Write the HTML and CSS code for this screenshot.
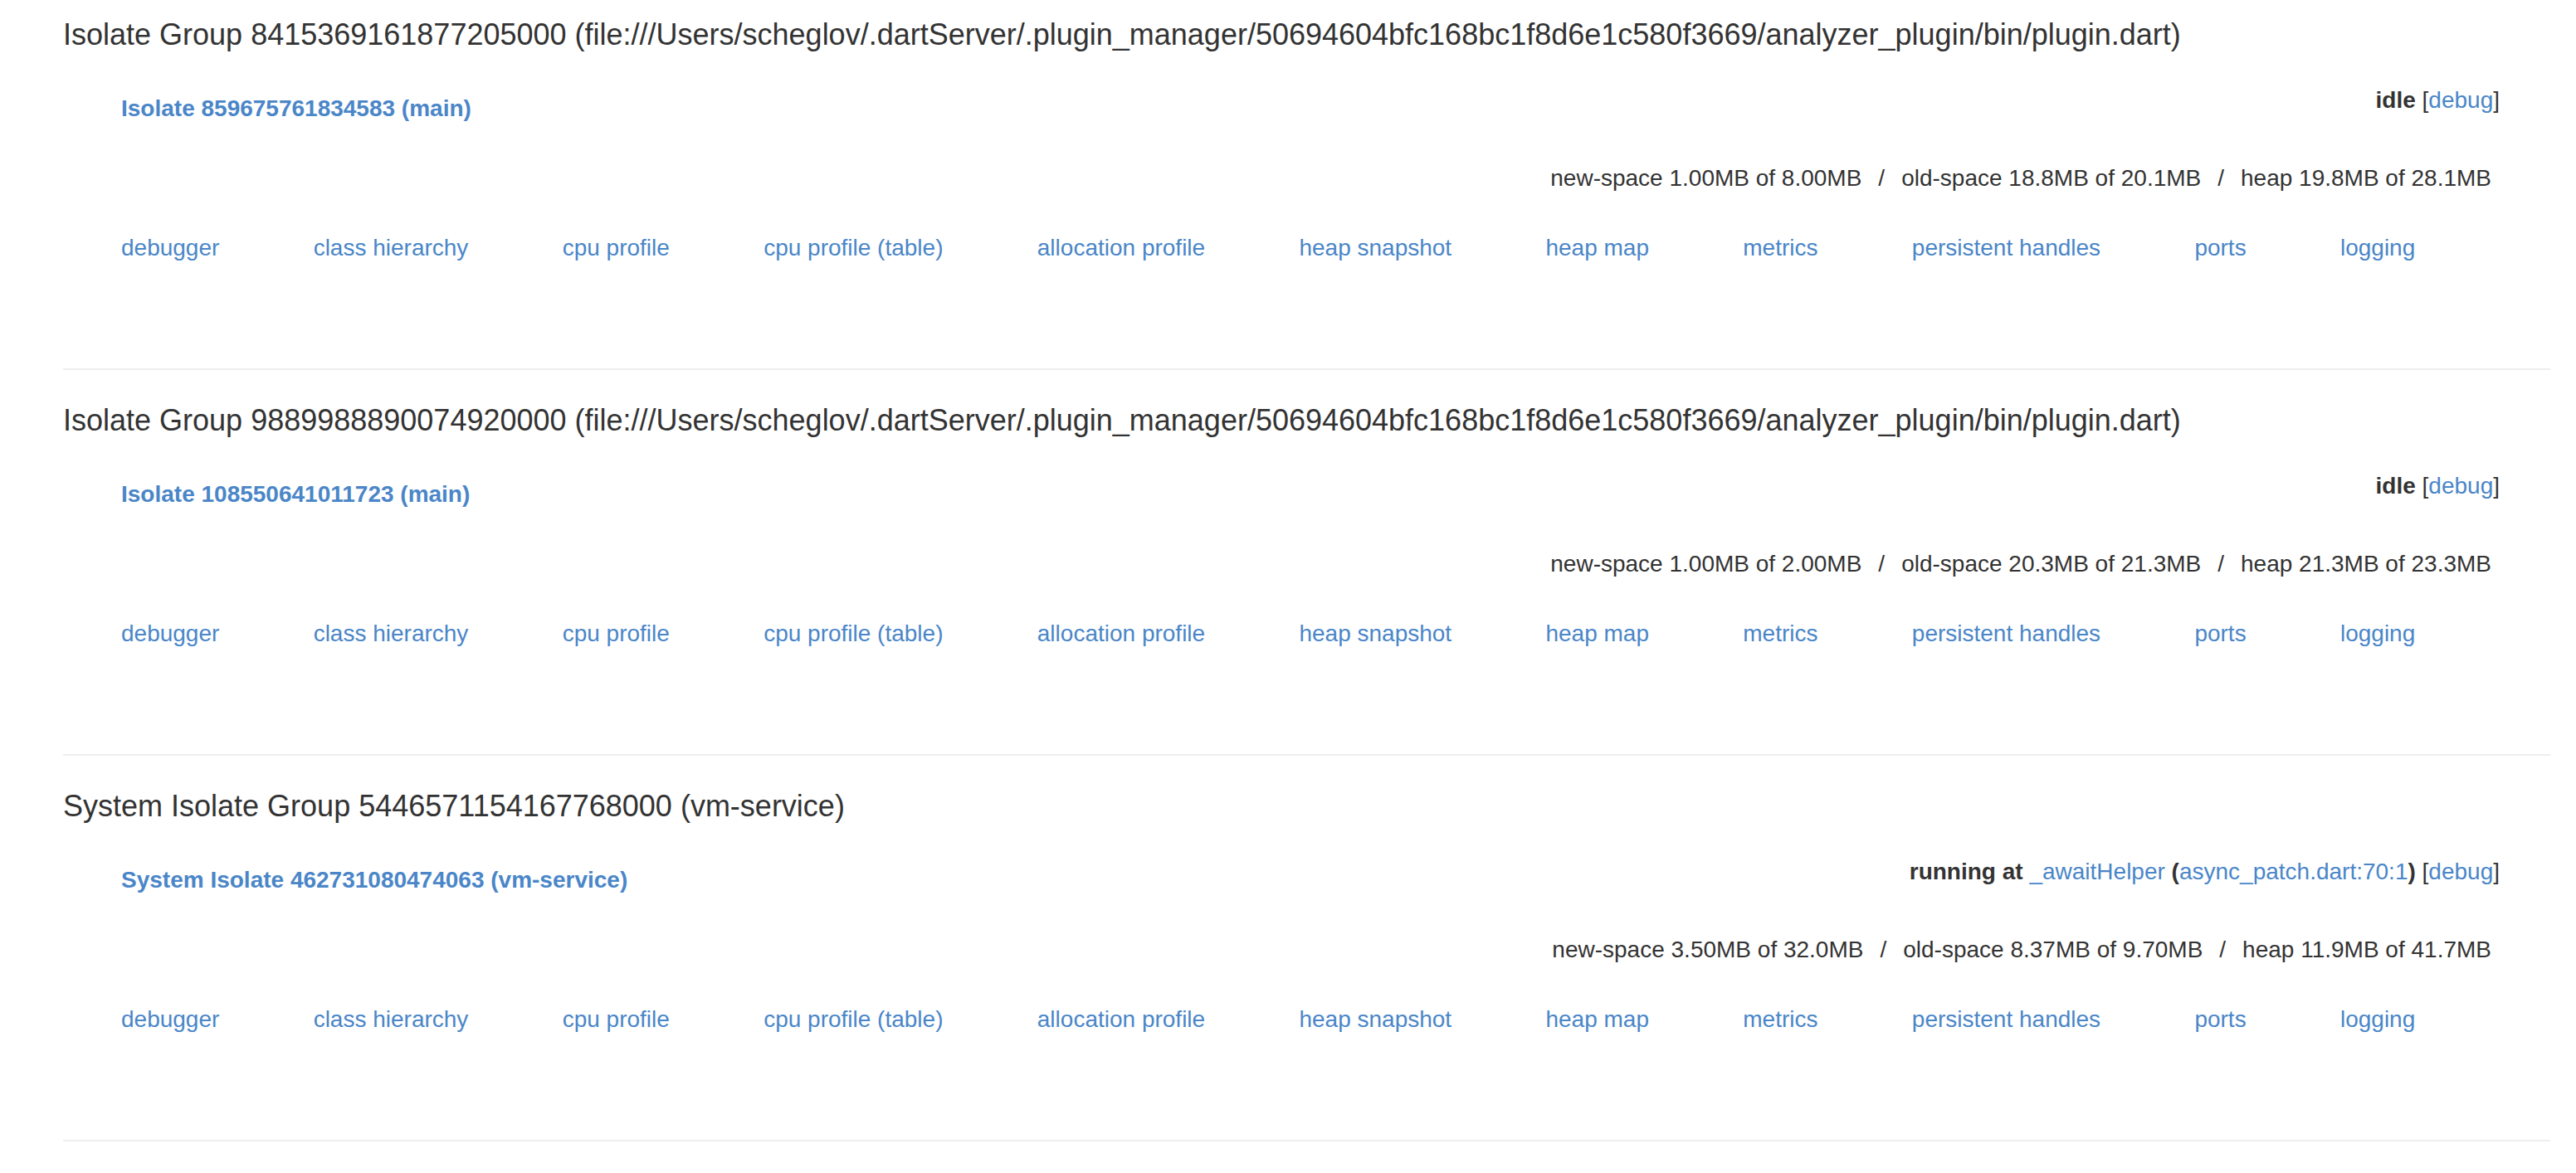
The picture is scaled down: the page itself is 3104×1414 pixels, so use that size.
FILE: index.html
```html
<!DOCTYPE html>
<html>
<head>
<meta charset="utf-8">
<title>Isolates</title>
<link rel="stylesheet" href="styles.css">
</head>
<body>
<div class="page">

  <section class="group">
    <h2 class="group-title">Isolate Group 8415369161877205000 (file:///Users/scheglov/.dartServer/.plugin_manager/50694604bfc168bc1f8d6e1c580f3669/analyzer_plugin/bin/plugin.dart)</h2>
    <div class="isolate">
      <div class="isolate-head">
        <a class="isolate-name" href="#">Isolate 859675761834583 (main)</a>
        <div class="status"><b>idle</b> [<a href="#">debug</a>]</div>
      </div>
      <div class="memory">new-space 1.00MB of 8.00MB<span class="sep">/</span>old-space 18.8MB of 20.1MB<span class="sep">/</span>heap 19.8MB of 28.1MB</div>
      <nav class="links">
        <a href="#">debugger</a>
        <a href="#">class hierarchy</a>
        <a href="#">cpu profile</a>
        <a href="#">cpu profile (table)</a>
        <a href="#">allocation profile</a>
        <a href="#">heap snapshot</a>
        <a href="#">heap map</a>
        <a href="#">metrics</a>
        <a href="#">persistent handles</a>
        <a href="#">ports</a>
        <a href="#">logging</a>
      </nav>
    </div>
  </section>

  <section class="group">
    <h2 class="group-title">Isolate Group 9889988890074920000 (file:///Users/scheglov/.dartServer/.plugin_manager/50694604bfc168bc1f8d6e1c580f3669/analyzer_plugin/bin/plugin.dart)</h2>
    <div class="isolate">
      <div class="isolate-head">
        <a class="isolate-name" href="#">Isolate 108550641011723 (main)</a>
        <div class="status"><b>idle</b> [<a href="#">debug</a>]</div>
      </div>
      <div class="memory">new-space 1.00MB of 2.00MB<span class="sep">/</span>old-space 20.3MB of 21.3MB<span class="sep">/</span>heap 21.3MB of 23.3MB</div>
      <nav class="links">
        <a href="#">debugger</a>
        <a href="#">class hierarchy</a>
        <a href="#">cpu profile</a>
        <a href="#">cpu profile (table)</a>
        <a href="#">allocation profile</a>
        <a href="#">heap snapshot</a>
        <a href="#">heap map</a>
        <a href="#">metrics</a>
        <a href="#">persistent handles</a>
        <a href="#">ports</a>
        <a href="#">logging</a>
      </nav>
    </div>
  </section>

  <section class="group">
    <h2 class="group-title">System Isolate Group 5446571154167768000 (vm-service)</h2>
    <div class="isolate">
      <div class="isolate-head">
        <a class="isolate-name" href="#">System Isolate 462731080474063 (vm-service)</a>
        <div class="status"><b>running at</b> <a href="#">_awaitHelper</a> <b>(</b><a href="#">async_patch.dart:70:1</a><b>)</b> [<a href="#">debug</a>]</div>
      </div>
      <div class="memory">new-space 3.50MB of 32.0MB<span class="sep">/</span>old-space 8.37MB of 9.70MB<span class="sep">/</span>heap 11.9MB of 41.7MB</div>
      <nav class="links">
        <a href="#">debugger</a>
        <a href="#">class hierarchy</a>
        <a href="#">cpu profile</a>
        <a href="#">cpu profile (table)</a>
        <a href="#">allocation profile</a>
        <a href="#">heap snapshot</a>
        <a href="#">heap map</a>
        <a href="#">metrics</a>
        <a href="#">persistent handles</a>
        <a href="#">ports</a>
        <a href="#">logging</a>
      </nav>
    </div>
  </section>

</div>
</body>
</html>
```

FILE: styles.css
```css
html, body {
  margin: 0;
  padding: 0;
  background: #ffffff;
}

body {
  font-family: "Liberation Sans", Arial, Helvetica, sans-serif;
  font-size: 28px;
  color: #333333;
}

a {
  color: #4a86c8;
  text-decoration: none;
}

.page {
  padding: 20px 31px 0 76px;
}

.group {
  border-bottom: 2px solid #eeeeee;
  padding-bottom: 127px;
}

.group + .group {
  margin-top: 39px;
}

.group-title {
  margin: 0;
  font-size: 36px;
  line-height: 44px;
  font-weight: normal;
  color: #333333;
  white-space: nowrap;
}

.isolate {
  margin: 0 61px 0 70px;
  padding-top: 39px;
}

.isolate-head {
  display: flex;
  justify-content: space-between;
  align-items: flex-start;
}

.isolate-name {
  font-weight: bold;
  line-height: 36px;
  padding-top: 10px;
}

.status {
  line-height: 36px;
}

.status b {
  font-weight: bold;
}

.memory {
  margin-top: 48px;
  line-height: 36px;
  text-align: right;
  padding-right: 10px;
}

.sep {
  margin: 0 20px;
}

.links {
  display: flex;
  gap: 113.3px;
  margin-top: 48px;
  line-height: 36px;
}
```
